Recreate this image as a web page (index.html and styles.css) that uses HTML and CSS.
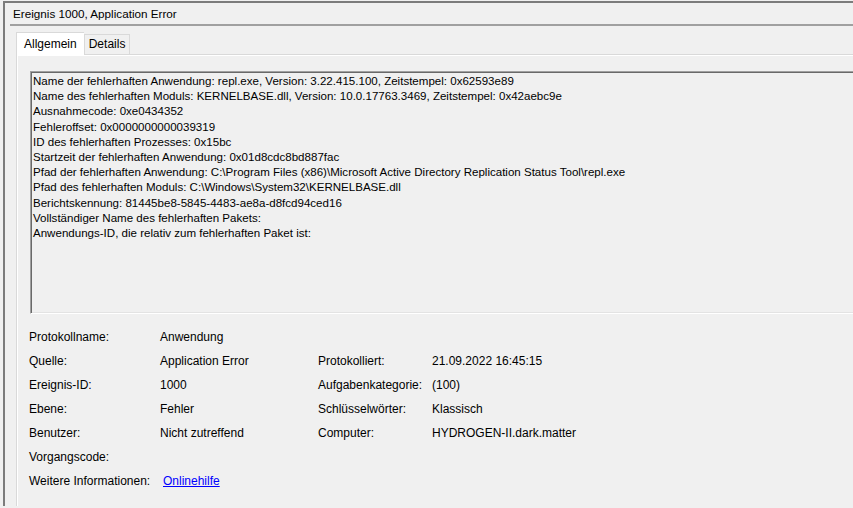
FILE: index.html
```html
<!DOCTYPE html>
<html lang="de">
<head>
<meta charset="utf-8">
<title>Ereignis 1000, Application Error</title>
<link rel="stylesheet" href="styles.css">
</head>
<body>
<div class="frame">
  <div class="title">Ereignis 1000, Application Error</div>
  <div class="sep"></div>
  <div class="tabs">
    <div class="tab active">Allgemein</div>
    <div class="tab">Details</div>
  </div>
  <div class="panel">
    <div class="textbox">
      <div>Name der fehlerhaften Anwendung: repl.exe, Version: 3.22.415.100, Zeitstempel: 0x62593e89</div>
      <div>Name des fehlerhaften Moduls: KERNELBASE.dll, Version: 10.0.17763.3469, Zeitstempel: 0x42aebc9e</div>
      <div>Ausnahmecode: 0xe0434352</div>
      <div>Fehleroffset: 0x0000000000039319</div>
      <div>ID des fehlerhaften Prozesses: 0x15bc</div>
      <div>Startzeit der fehlerhaften Anwendung: 0x01d8cdc8bd887fac</div>
      <div>Pfad der fehlerhaften Anwendung: C:\Program Files (x86)\Microsoft Active Directory Replication Status Tool\repl.exe</div>
      <div>Pfad des fehlerhaften Moduls: C:\Windows\System32\KERNELBASE.dll</div>
      <div>Berichtskennung: 81445be8-5845-4483-ae8a-d8fcd94ced16</div>
      <div>Vollständiger Name des fehlerhaften Pakets:</div>
      <div>Anwendungs-ID, die relativ zum fehlerhaften Paket ist:</div>
    </div>
    <div class="props">
      <div>Protokollname:</div><div>Anwendung</div><div></div><div></div>
      <div>Quelle:</div><div>Application Error</div><div>Protokolliert:</div><div>21.09.2022 16:45:15</div>
      <div>Ereignis-ID:</div><div>1000</div><div>Aufgabenkategorie:</div><div>(100)</div>
      <div>Ebene:</div><div>Fehler</div><div>Schlüsselwörter:</div><div>Klassisch</div>
      <div>Benutzer:</div><div>Nicht zutreffend</div><div>Computer:</div><div>HYDROGEN-II.dark.matter</div>
      <div>Vorgangscode:</div><div></div><div></div><div></div>
      <div>Weitere Informationen:</div><div><a class="link" href="#">Onlinehilfe</a></div><div></div><div></div>
    </div>
  </div>
</div>
</body>
</html>
```

FILE: styles.css
```css
html, body {
  margin: 0;
  padding: 0;
  background: #f0f0f0;
  overflow: hidden;
  width: 853px;
  height: 508px;
}
body {
  font-family: "Liberation Sans", Arial, sans-serif;
  font-size: 12px;
  color: #000;
}
.frame {
  margin: 1px 0 0 3px;
  border-left: 2px solid #7c7c7c;
  border-top: 2px solid #7c7c7c;
  height: 505px;
  width: 850px;
  box-sizing: border-box;
  overflow: hidden;
}
.title {
  height: 21px;
  box-sizing: border-box;
  padding: 3px 0 0 8px;
  line-height: 15px;
  font-size: 11.7px;
  white-space: nowrap;
}
.sep {
  margin-left: 5px;
  height: 2px;
  background: #a0a0a0;
}
.tabs {
  display: flex;
  align-items: flex-end;
  margin: 6px 0 0 11px;
  height: 22px;
  position: relative;
  z-index: 1;
}
.tab {
  box-sizing: border-box;
  border: 1px solid #d9d9d9;
  border-bottom: none;
  background: #f0f0f0;
  height: 20px;
  line-height: 19px;
  padding: 0 4px;
  white-space: nowrap;
}
.tab.active {
  background: #fff;
  height: 23px;
  margin-bottom: -1px;
  padding: 0 7px;
  line-height: 23px;
  border-right: none;
}
.panel {
  margin-left: 11px;
  border-top: 1px solid #d9d9d9;
  border-left: 1px solid #d9d9d9;
  box-shadow: inset 1px 1px 0 #fff;
  padding: 16px 0 0 13px;
  height: 460px;
}
.textbox {
  box-sizing: border-box;
  height: 243px;
  width: 823px;
  border-top: 1px solid #a0a0a0;
  border-left: 1px solid #a0a0a0;
  border-bottom: 1px solid #fff;
  box-shadow: inset 1px 1px 0 #696969, inset 0 -1px 0 #e3e3e3;
  padding: 2px 0 0 2px;
  line-height: 15.2px;
  font-size: 11.55px;
  white-space: nowrap;
  overflow: hidden;
}
.props {
  display: grid;
  grid-template-columns: 131px 158px 114px auto;
  grid-auto-rows: 24px;
  line-height: 24px;
  margin-top: 11px;
  margin-left: -1px;
  white-space: nowrap;
}
.link {
  color: #0000ff;
  text-decoration: underline;
  margin-left: 3px;
}
```
